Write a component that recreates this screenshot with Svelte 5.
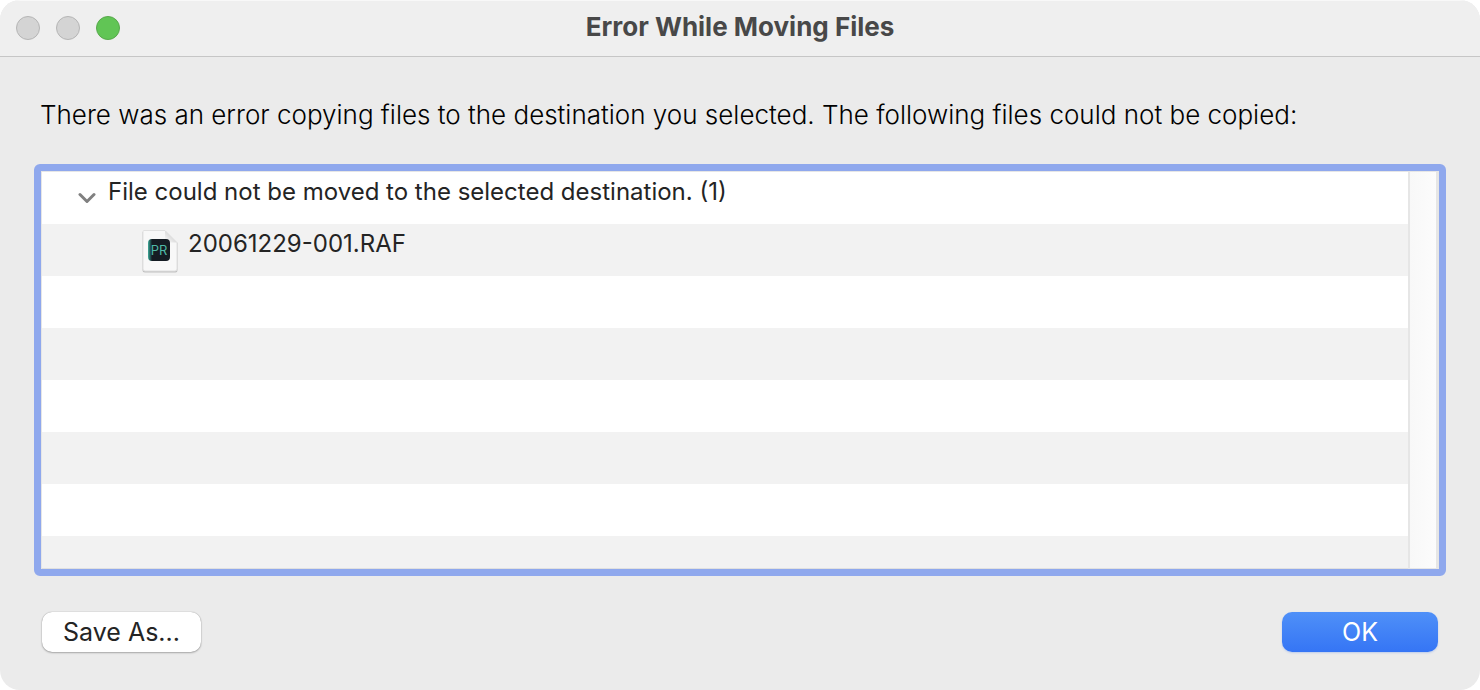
<script>
  const groups = [
    {
      message: 'File could not be moved to the selected destination.',
      files: ['20061229-001.RAF'],
    },
  ];

  let open = $state(true);
</script>

<main class="window">
  <header class="titlebar">
    <div class="lights">
      <button class="light" aria-label="Close" disabled></button>
      <button class="light" aria-label="Minimize" disabled></button>
      <button class="light zoom" aria-label="Zoom"></button>
    </div>
    <h1>Error While Moving Files</h1>
  </header>

  <section class="content">
    <p class="message">There was an error copying files to the destination you selected. The following files could not be copied:</p>

    <div class="list">
      <div class="rows">
        {#each groups as group}
          <div class="row group">
            <button class="toggle" aria-label="Toggle group" aria-expanded={open} onclick={() => (open = !open)}>
              <svg class:closed={!open} width="18" height="12" viewBox="0 0 18 12">
                <path d="M2 2.5 9 9.5 16 2.5" fill="none" stroke="#808080" stroke-width="3" stroke-linecap="round" stroke-linejoin="round" />
              </svg>
            </button>
            <span>{group.message} ({group.files.length})</span>
          </div>
          {#if open}
            {#each group.files as file}
              <div class="row file">
                <svg class="icon" width="38" height="50" viewBox="0 0 38 50">
                  <defs>
                    <linearGradient id="fold" x1="0" y1="1" x2="1" y2="0">
                      <stop offset="0" stop-color="#fff" />
                      <stop offset="0.5" stop-color="#dcdcdc" />
                      <stop offset="0.5" stop-color="#f2f2f2" />
                    </linearGradient>
                    <linearGradient id="badge">
                      <stop offset="0" stop-color="#3fae9c" />
                      <stop offset="0.1" stop-color="#235b58" />
                      <stop offset="0.18" stop-color="#151c23" />
                    </linearGradient>
                  </defs>
                  <path d="M3 7.5H25L36.5 19V46Q36.5 48.5 34.5 48.5H4Q1.5 48.5 1.5 46V8.5Q1.5 7.5 3 7.5Z" fill="#c0c0c0" />
                  <path d="M3 6.5H24L36 18.5V45Q36 47 34 47H4Q2 47 2 45V7.5Q2 6.5 3 6.5Z" fill="#f8f8f8" stroke="#e0e0e0" />
                  <path d="M24 6.5V16.5Q24 18.5 26 18.5H36Z" fill="url(#fold)" />
                  <rect x="7" y="15" width="22" height="22" rx="4" fill="url(#badge)" />
                  <text x="18" y="31" text-anchor="middle">PR</text>
                </svg>
                <span>{file}</span>
              </div>
            {/each}
          {/if}
        {/each}
      </div>
      <div class="scrollbar"></div>
    </div>

    <footer>
      <button class="btn">Save As...</button>
      <button class="btn primary">OK</button>
    </footer>
  </section>
</main>

<style>
  :global(body) {
    margin: 0;
    background: #fff;
  }

  .window {
    box-sizing: border-box;
    min-height: 100vh;
    display: flex;
    flex-direction: column;
    overflow: hidden;
    border-radius: 20px;
    background: #ebebeb;
    color: #242424;
    font-family: Inter, sans-serif;
    font-size: 24px;
  }

  .titlebar {
    display: grid;
    grid-template-columns: 1fr auto 1fr;
    align-items: center;
    height: 56px;
    padding: 0 16px;
    border-bottom: 1px solid #c6c6c6;
    background: #efefef;
    box-shadow: inset 0 1px #f8f8f8;
  }

  .lights {
    display: flex;
    gap: 16px;
  }

  .light {
    box-sizing: border-box;
    width: 24px;
    height: 24px;
    padding: 0;
    border: 1px solid #b5b5b5;
    border-radius: 50%;
    background: #d4d4d4;
  }

  .zoom {
    border-color: #58a84c;
    background: #61c555;
  }

  h1 {
    margin: 0;
    padding-bottom: 2px;
    color: #484848;
    font-size: 26px;
    font-weight: 700;
    line-height: 32px;
  }

  .content {
    flex: 1;
    display: flex;
    flex-direction: column;
    padding: 42px 34px 38px;
  }

  .message {
    margin: 0 6px 33px;
    color: #000;
    font-size: 26px;
    font-weight: 300;
    line-height: 32px;
  }

  .list {
    flex: 1;
    display: flex;
    border: 7px solid #8fa8ed;
    border-radius: 6px;
    background: #fff;
  }

  .rows {
    flex: 1;
    padding-top: 1px;
    background: repeating-linear-gradient(#fff 0 52px, #f2f2f2 52px 104px) 0 1px;
    box-shadow: inset 1px 1px #e6e6e6, inset 0 -1px #e0e0e0;
  }

  .row {
    display: flex;
    height: 52px;
    line-height: 40px;
  }

  .group {
    padding-left: 37px;
    gap: 12px;
  }

  .file {
    padding-left: 100px;
    gap: 9px;
  }

  .toggle {
    display: flex;
    align-items: center;
    padding: 0;
    border: 0;
    background: none;
  }

  .closed {
    transform: rotate(-90deg);
  }

  .icon text {
    fill: #4fb9a6;
    font-size: 13px;
  }

  .scrollbar {
    width: 26px;
    border: solid #e6e6e6;
    border-width: 1px 3px 1px 2px;
    background: linear-gradient(90deg, #f8f8f8, #fcfcfc);
  }

  footer {
    display: flex;
    justify-content: space-between;
    margin: 36px 8px 0;
  }

  .btn {
    height: 40px;
    min-width: 156px;
    padding: 0 21px;
    border: 0;
    border-radius: 10px;
    background: #fff;
    box-shadow: 0 0 1px #0006, 0 1px 2px #0004;
    color: inherit;
    font-family: inherit;
    font-size: 25px;
    line-height: 38px;
  }

  .primary {
    background: linear-gradient(#4f90f8, #3575f5);
    box-shadow: 0 1px 2px #3575f540;
    color: #fff;
  }
</style>
